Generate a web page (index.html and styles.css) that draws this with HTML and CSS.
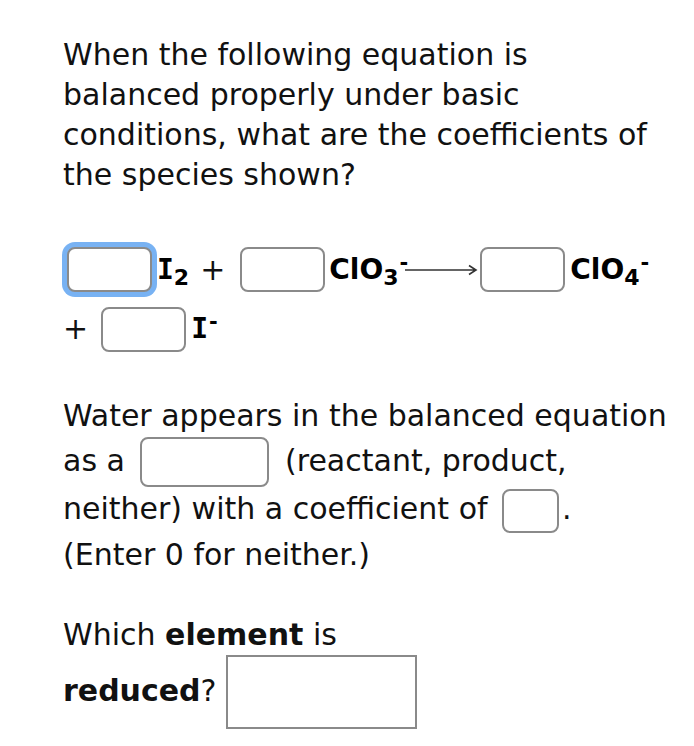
FILE: index.html
```html
<!DOCTYPE html>
<html>
<head>
<meta charset="utf-8">
<link rel="stylesheet" href="styles.css">
</head>
<body>
<div class="page">
  <p class="intro">When the following equation is<br>balanced properly under basic<br>conditions, what are the coefficients of<br>the species shown?</p>

  <div class="eq eq-row1">
    <span class="box coef focus"></span>
    <span class="chem c-i2"><span class="iglyph">I</span><sub>2</sub></span>
    <span class="plus">+</span>
    <span class="box coef"></span>
    <span class="chem c-clo3">ClO<sub>3</sub><sup>-</sup></span>
    <svg class="arrow" width="74" height="14" viewBox="0 0 74 14"><path d="M1 7 H72 M65 2.5 L72 7 L65 11.5" fill="none" stroke="#333" stroke-width="1.6"/></svg>
    <span class="box coef"></span>
    <span class="chem c-clo4">ClO<sub>4</sub><sup>-</sup></span>
  </div>
  <div class="eq eq-row2">
    <span class="plus first">+</span>
    <span class="box coef"></span>
    <span class="chem c-i"><span class="iglyph">I</span><sup>-</sup></span>
  </div>

  <p class="water">Water appears in the balanced equation<br>as a <span class="box wide"></span> (reactant, product,<br>neither) with a coefficient of <span class="box small"></span>.<br>(Enter 0 for neither.)</p>

  <p class="which">Which <b>element</b> is<br><b>reduced</b>? <span class="box answer"></span></p>
</div>
</body>
</html>
```
FILE: styles.css
```css
html, body { margin: 0; padding: 0; background: #fff; }
.page {
  padding: 35px 10px 0 63px;
  font-family: "DejaVu Sans", Verdana, sans-serif;
  font-size: 30px;
  line-height: 40px;
  color: #111;
}
p { margin: 0; }
.box {
  display: inline-block;
  box-sizing: border-box;
  border: 2px solid #8a8a8a;
  border-radius: 8px;
  background: #fff;
  vertical-align: middle;
}
.coef { width: 85px; height: 45px; flex: none; }
.focus { box-shadow: 0 0 0 5px #78b2f3; margin-left: 4px; }
.eq { display: flex; align-items: center; }
.eq-row1 { margin-top: 47px; height: 55px; }
.eq-row2 { margin-top: 10px; height: 44px; }
.chem { font-weight: bold; font-size: 28px; line-height: 30px; white-space: nowrap; color: #000; }
.chem sub { font-size: 22px; vertical-align: -6px; line-height: 0; }
.chem sup { font-size: 21px; vertical-align: 9px; line-height: 0; margin-left: 1px; }
.iglyph { font-family: "DejaVu Sans Mono", monospace; }
.c-i2 { margin-left: 5px; }
.c-clo3 { margin-left: 4px; }
.c-clo4 { margin-left: 5px; }
.c-i { margin-left: 5px; }
.plus { margin: 0 15px 0 11px; }
.plus.first { margin-left: 0; margin-right: 13px; }
.arrow { margin: 0 2px 0 -4px; flex: none; }
.water { margin-top: 43px; line-height: 43px; }
.wide { width: 129px; height: 50px; margin: 0 6px; }
.small { width: 57px; height: 44px; margin: 0 3px 0 5px; }
.which { margin-top: 39px; }
.answer { width: 191px; height: 74px; border-radius: 0; }
```
